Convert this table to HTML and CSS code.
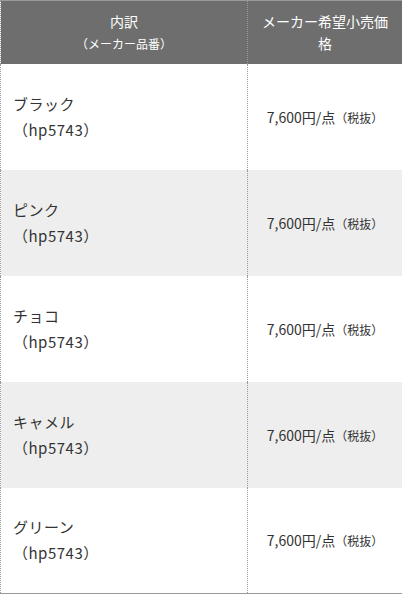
FILE: index.html
```html
<!DOCTYPE html>
<html lang="ja">
<head>
<meta charset="utf-8">
<link rel="stylesheet" href="styles.css">
</head>
<body>
<table class="spec">
  <thead>
    <tr>
      <th class="col-name">内訳<br><span class="sub">（メーカー品番）</span></th>
      <th class="col-price">メーカー希望小売価格</th>
    </tr>
  </thead>
  <tbody>
    <tr>
      <td class="name">ブラック<br>（hp5743）</td>
      <td class="price">7,600円/点<span class="tax">（税抜）</span></td>
    </tr>
    <tr class="alt">
      <td class="name">ピンク<br>（hp5743）</td>
      <td class="price">7,600円/点<span class="tax">（税抜）</span></td>
    </tr>
    <tr>
      <td class="name">チョコ<br>（hp5743）</td>
      <td class="price">7,600円/点<span class="tax">（税抜）</span></td>
    </tr>
    <tr class="alt">
      <td class="name">キャメル<br>（hp5743）</td>
      <td class="price">7,600円/点<span class="tax">（税抜）</span></td>
    </tr>
    <tr>
      <td class="name">グリーン<br>（hp5743）</td>
      <td class="price">7,600円/点<span class="tax">（税抜）</span></td>
    </tr>
  </tbody>
</table>
</body>
</html>
```
FILE: styles.css
```css
html, body {
  margin: 0;
  padding: 0;
  background: #fff;
}
body {
  font-family: "Noto Sans CJK JP", "Noto Sans", sans-serif;
  color: #333;
}
.spec {
  width: 100%;
  border-collapse: collapse;
  border-top: 1px solid #9a9a9a;
  border-bottom: 1px solid #9a9a9a;
  table-layout: fixed;
}
.spec th,
.spec td {
  border-left: 1px dotted #999;
  padding: 0;
}
.col-name {
  width: 247px;
}
.spec th {
  background: #6e6e6e;
  color: #fff;
  font-weight: normal;
  font-size: 14px;
  line-height: 22px;
  height: 63px;
  box-sizing: border-box;
  text-align: center;
  vertical-align: middle;
  padding: 0 10px;
}
.spec th .sub {
  font-size: 12px;
}
.spec td {
  height: 106px;
  box-sizing: border-box;
  vertical-align: middle;
}
.name {
  font-size: 15px;
  line-height: 26px;
  letter-spacing: 0.5px;
  padding: 0 12px !important;
}
.price {
  font-size: 14px;
  text-align: center;
}
.tax {
  font-size: 12px;
}
.alt td {
  background: #eeeeee;
}
```
